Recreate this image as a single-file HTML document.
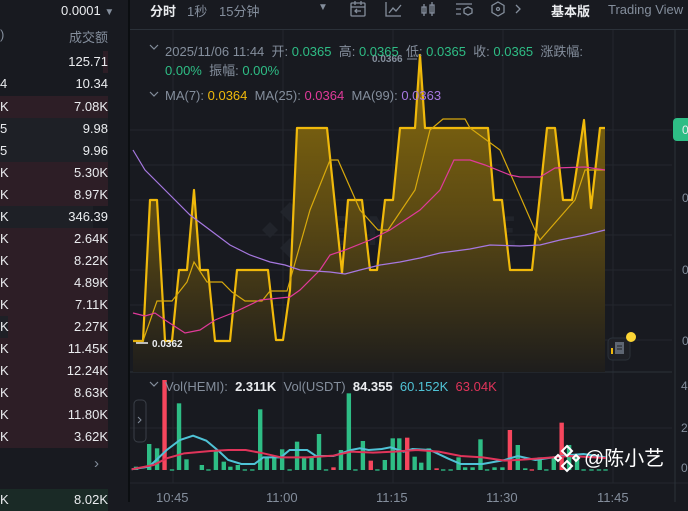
<!DOCTYPE html>
<html><head><meta charset="utf-8"><style>
body{margin:0;width:688px;height:502px;background:#181a20;overflow:hidden;font-family:"Liberation Sans","Noto Sans CJK SC",sans-serif;position:relative}
.a{position:absolute;white-space:nowrap}
.r{position:absolute;left:0;width:108px;height:22px;font-size:13px;color:#eaecef;text-align:right;line-height:22px}
</style></head><body>
<div class="a" style="left:0;top:0;width:108px;height:502px;background:#181a20"></div>
<div class="a" style="left:61px;top:3px;font-size:13px;color:#eaecef">0.0001 <span style="color:#848e9c;font-size:10px">▼</span></div>
<div class="a" style="left:0;top:27px;font-size:13px;color:#848e9c">)</div>
<div class="a" style="left:69px;top:27px;font-size:13px;color:#848e9c">成交额</div>
<div class="r" style="top:51px"><div class="a" style="left:103px;width:5px;height:22px;background:#2d1e26"></div><span style="position:relative">125.71</span></div>
<div class="r" style="top:73px"><span class="a" style="left:0;color:#eaecef">4</span>10.34</div>
<div class="r" style="top:96px;background:#2d1e26"><span class="a" style="left:0">K</span>7.08K</div>
<div class="r" style="top:118px;background:#1e2026"><span class="a" style="left:0">5</span>9.98</div>
<div class="r" style="top:140px;background:#1e2026"><span class="a" style="left:0">5</span>9.96</div>
<div class="r" style="top:162px;background:#2d1e26"><span class="a" style="left:0">K</span>5.30K</div>
<div class="r" style="top:184px;background:#2d1e26"><span class="a" style="left:0">K</span>8.97K</div>
<div class="r" style="top:206px;background:linear-gradient(90deg,#1e2026 0,#1e2026 93px,#181a20 93px)"><span class="a" style="left:0">K</span>346.39</div>
<div class="r" style="top:228px;background:#2d1e26"><span class="a" style="left:0">K</span>2.64K</div>
<div class="r" style="top:250px;background:#2d1e26"><span class="a" style="left:0">K</span>8.22K</div>
<div class="r" style="top:272px;background:#2d1e26"><span class="a" style="left:0">K</span>4.89K</div>
<div class="r" style="top:294px;background:#2d1e26"><span class="a" style="left:0">K</span>7.11K</div>
<div class="r" style="top:316px;background:linear-gradient(90deg,#1e2026 0,#1e2026 8px,#2d1e26 8px)"><span class="a" style="left:0">K</span>2.27K</div>
<div class="r" style="top:338px;background:#2d1e26"><span class="a" style="left:0">K</span>11.45K</div>
<div class="r" style="top:360px;background:#2d1e26"><span class="a" style="left:0">K</span>12.24K</div>
<div class="r" style="top:382px;background:#2d1e26"><span class="a" style="left:0">K</span>8.63K</div>
<div class="r" style="top:404px;background:#2d1e26"><span class="a" style="left:0">K</span>11.80K</div>
<div class="r" style="top:426px;background:#2d1e26"><span class="a" style="left:0">K</span>3.62K</div>
<div class="a" style="left:94px;top:455px;font-size:15px;color:#848e9c">›</div>
<div class="r" style="top:489px;background:#1a2a26"><span class="a" style="left:0">K</span>8.02K</div>
<div class="a" style="left:128px;top:0;width:2px;height:502px;background:#0b0e11"></div>

<div class="a" style="left:150px;top:1px;font-size:13px;color:#eaecef;font-weight:bold">分时</div>
<div class="a" style="left:187px;top:1px;font-size:13px;color:#848e9c">1秒</div>
<div class="a" style="left:219px;top:1px;font-size:13px;color:#848e9c">15分钟</div>
<div class="a" style="left:318px;top:2px;font-size:10px;color:#848e9c">▼</div>
<svg class="a" style="left:344px;top:0" width="200" height="22" fill="none" stroke="#848e9c" stroke-width="1.3">
<rect x="7" y="3" width="14" height="13" rx="1"/><path d="M7 7h14M11 1v4M17 1v4M17 11h-6M13 9l-2 2 2 2"/>
<path d="M42 2v14h15M45 13l4-5 3 3 5-6"/>
<path d="M80 4v12M78 7h4v6h-4zM88 2v14M86 5h4v8h-4z"/>
<path d="M112 4h16M112 9h5M112 14h5"/><path d="M124 7l4 2v4l-4 2-4-2v-4z"/>
<path d="M154 2l6 3.5v7L154 16l-6-3.5v-7z"/><circle cx="154" cy="9" r="1.5"/>
<path d="M172 5l4 4-4 4"/>
</svg>
<div class="a" style="left:551px;top:1px;font-size:13px;color:#eaecef;font-weight:bold">基本版</div>
<div class="a" style="left:608px;top:2px;font-size:13px;color:#848e9c">Trading View</div>
<div class="a" style="left:130px;top:29px;width:558px;height:1px;background:#2b3139"></div>

<svg class="a" style="left:0;top:0" width="688" height="502">
<g stroke="#23272e" stroke-width="1">
<path d="M130 130H672M130 165H672M130 200H672M130 235H672M130 270H672M130 305H672M130 340H672M130 428H672M130 483H688"/>
<path d="M173 30V483M283 30V483M393 30V483M503 30V483M613 30V483"/>
</g>
<path d="M130 372H672" stroke="#2b3139"/>
<path d="M675 30V502" stroke="#2b3139"/>
<g transform="translate(290,230)" fill="#23262d" opacity=".9"><path d="M0-28l10 10-10 10-10-10zM-20-8l8 8-8 8-8-8zM20-8l8 8-8 8-8-8zM0 8l10 10-10 10-10-10z"/><text x="35" y="15" font-size="42" font-weight="bold" font-family="Liberation Sans">BINANCE</text></g>
<defs><linearGradient id="g" x1="0" y1="0" x2="0" y2="1"><stop offset="0" stop-color="#8a6d0c"/><stop offset=".5" stop-color="#5c4a13"/><stop offset="1" stop-color="#1e1d1c"/></linearGradient></defs>
<path fill="url(#g)" d="M133 341L143 341L150 200L157 200L165 341L172 341L179 270L187 270L194 190L200 270L208 270L215 341L230 341L237 270L268 270L276 340L283 340L290 290L297 128L327 128L342 273L348 200L362 200L370 270L377 270L385 200L393 200L400 128L415 128L420 55L425 128L488 128L494 200L502 200L510 270L532 270L547 128L555 128L563 200L572 200L584 120L591 208L600 128L605 128L605 372L133 372Z"/>
<path fill="none" stroke="#f0b90b" stroke-width="2.2" stroke-linejoin="round" d="M133 341L143 341L150 200L157 200L165 341L172 341L179 270L187 270L194 190L200 270L208 270L215 341L230 341L237 270L268 270L276 340L283 340L290 290L297 128L327 128L342 273L348 200L362 200L370 270L377 270L385 200L393 200L400 128L415 128L420 55L425 128L488 128L494 200L502 200L510 270L532 270L547 128L555 128L563 200L572 200L584 120L591 208L600 128L605 128"/>
<path fill="none" stroke="#d8a90c" stroke-width="1.2" d="M133 341L143 341L157 301L172 301L187 282L194 262L207 282L222 282L232 292L245 301L262 301L270 291L287 291L310 210L330 160L338 160L360 210L378 230L388 230L415 190L430 130L443 119L465 119L470 128L500 150L535 230L540 240L575 200L585 170L605 170"/>
<path fill="none" stroke="#e03a9a" stroke-width="1.2" d="M133 313L145 316L155 313L165 320L185 333L200 330L215 320L235 312L260 300L290 297L300 290L320 270L330 255L345 250L370 240L390 230L420 210L440 190L454 160L470 160L485 165L510 175L520 177L540 177L555 168L585 167L605 170"/>
<path fill="none" stroke="#a678e0" stroke-width="1.2" d="M133 150L145 170L160 185L175 200L190 215L210 230L230 245L250 255L270 262L285 265L300 270L330 272L345 274L360 270L380 265L400 262L420 258L440 253L470 249L490 245L520 246L540 245L560 240L585 235L605 230"/>
<path d="M136 343h12" stroke="#eaecef" stroke-width="1.5"/>
<text x="152" y="347" font-size="10" fill="#eaecef" font-weight="bold" font-family="Liberation Sans">0.0362</text>
<text x="372" y="62" font-size="10" fill="#848e9c" font-weight="bold" font-family="Liberation Sans">0.0366</text>
<path d="M407 59h10" stroke="#848e9c"/>
<rect x="608" y="338" width="22" height="22" rx="4" fill="#1e2026" stroke="#2b3139"/>
<rect x="615" y="342" width="9" height="12" fill="#5e6673"/><path d="M617 346h5M617 349h5" stroke="#1e2026"/>
<rect x="611" y="348" width="2" height="6" fill="#f0b90b"/>
<circle cx="631" cy="337" r="5" fill="#fcd535"/>
<rect x="673" y="118" width="20" height="23" rx="4" fill="#2ebd85"/>
<text x="682" y="134" font-size="12" fill="#eaecef" font-family="Liberation Sans">0</text>
<g font-size="12" fill="#848e9c" font-family="Liberation Sans"><text x="682" y="202">0</text><text x="682" y="274">0</text><text x="682" y="345">0</text><text x="681" y="390">4</text><text x="681" y="432">2</text><text x="681" y="472">0</text></g>

<g transform="translate(0,370) scale(0.4388,0.3333)">
<g fill="#2ebd85">
<rect x="305" y="290" width="10" height="10"/><rect x="335" y="222" width="10" height="78"/><rect x="353" y="235" width="10" height="65"/>
<rect x="387" y="298" width="10" height="4"/><rect x="403" y="100" width="10" height="200"/><rect x="420" y="268" width="10" height="32"/>
<rect x="455" y="285" width="10" height="15"/><rect x="470" y="298" width="10" height="4"/><rect x="487" y="240" width="10" height="60"/>
<rect x="505" y="275" width="10" height="25"/><rect x="520" y="290" width="10" height="10"/><rect x="537" y="285" width="10" height="15"/>
<rect x="553" y="298" width="10" height="4"/><rect x="570" y="298" width="10" height="4"/><rect x="588" y="118" width="10" height="182"/>
<rect x="603" y="260" width="10" height="40"/><rect x="620" y="260" width="10" height="40"/><rect x="638" y="238" width="10" height="62"/>
<rect x="655" y="298" width="10" height="4"/><rect x="672" y="215" width="10" height="85"/><rect x="688" y="262" width="10" height="38"/>
<rect x="705" y="262" width="10" height="38"/><rect x="722" y="192" width="10" height="108"/><rect x="738" y="298" width="10" height="4"/>
<rect x="772" y="240" width="10" height="60"/><rect x="790" y="70" width="10" height="230"/><rect x="805" y="298" width="10" height="4"/>
<rect x="822" y="213" width="10" height="87"/><rect x="855" y="298" width="10" height="4"/><rect x="872" y="270" width="10" height="30"/>
<rect x="890" y="205" width="10" height="95"/><rect x="905" y="205" width="10" height="95"/><rect x="940" y="260" width="10" height="40"/>
<rect x="955" y="278" width="10" height="22"/><rect x="972" y="235" width="10" height="65"/><rect x="1005" y="298" width="10" height="4"/>
<rect x="1022" y="298" width="10" height="4"/><rect x="1040" y="262" width="10" height="38"/><rect x="1055" y="292" width="10" height="8"/>
<rect x="1072" y="292" width="10" height="8"/><rect x="1090" y="208" width="10" height="92"/><rect x="1105" y="298" width="10" height="4"/>
<rect x="1122" y="292" width="10" height="8"/><rect x="1140" y="292" width="10" height="8"/><rect x="1175" y="225" width="10" height="75"/>
<rect x="1192" y="295" width="10" height="5"/><rect x="1225" y="262" width="10" height="38"/><rect x="1240" y="298" width="10" height="4"/>
<rect x="1257" y="262" width="10" height="38"/><rect x="1292" y="225" width="10" height="75"/><rect x="1310" y="262" width="10" height="38"/>
<rect x="1325" y="298" width="10" height="4"/><rect x="1343" y="298" width="10" height="4"/><rect x="1360" y="298" width="10" height="4"/><rect x="1375" y="298" width="10" height="4"/>
</g>
<g fill="#f6465d">
<rect x="370" y="30" width="10" height="270"/><rect x="755" y="292" width="10" height="8"/><rect x="840" y="272" width="10" height="28"/>
<rect x="923" y="203" width="10" height="97"/><rect x="990" y="295" width="10" height="5"/><rect x="1157" y="180" width="10" height="120"/>
<rect x="1207" y="298" width="10" height="4"/><rect x="1275" y="158" width="10" height="142"/>
</g>
<path fill="none" stroke="#4fc3d6" stroke-width="2" vector-effect="non-scaling-stroke" d="M300 298L340 290L380 240L410 210L440 197L470 212L500 245L520 270L550 282L580 282L600 262L640 262L660 240L700 240L720 258L760 258L800 240L820 235L840 240L870 237L890 232L920 245L940 237L980 240L1020 265L1050 282L1100 282L1150 270L1180 258L1220 270L1260 262L1300 255L1330 252L1380 262"/>
<path fill="none" stroke="#e0345a" stroke-width="2" vector-effect="non-scaling-stroke" d="M300 298L350 285L380 265L420 250L480 243L520 240L560 240L600 250L640 262L700 262L760 257L800 245L850 248L900 245L950 240L1000 245L1050 258L1100 262L1150 272L1200 268L1260 262L1300 258L1380 264"/>
</g>
<rect x="134" y="400" width="12" height="42" rx="4" fill="none" stroke="#3a3f47"/>
<path d="M138 417l3 3-3 3" stroke="#848e9c" fill="none"/>
<path d="M150 45l4 4 4-4M150 92l4 4 4-4M150 382l4 4 4-4" stroke="#848e9c" fill="none" stroke-width="1.2"/>
<g transform="translate(567,455)" fill="none" stroke="#fff" stroke-width="2"><path d="M0-9l5 5-5 5-5-5zM-9 0l3 3-3 3-3-3zM9 0l3 3-3 3-3-3zM0 6l5 5-5 5-5-5z"/></g>
</svg>

<div class="a" style="left:165px;top:41px;font-size:13px;color:#848e9c">2025/11/06 11:44&nbsp;&nbsp;开: <span style="color:#2ebd85">0.0365</span>&nbsp;&nbsp;高: <span style="color:#2ebd85">0.0365</span>&nbsp;&nbsp;低: <span style="color:#2ebd85">0.0365</span>&nbsp;&nbsp;收: <span style="color:#2ebd85">0.0365</span>&nbsp;&nbsp;涨跌幅:</div>
<div class="a" style="left:165px;top:60px;font-size:13px;color:#848e9c"><span style="color:#2ebd85">0.00%</span>&nbsp;&nbsp;振幅: <span style="color:#2ebd85">0.00%</span></div>
<div class="a" style="left:165px;top:88px;font-size:13px;color:#848e9c">MA(7): <span style="color:#f0b90b">0.0364</span>&nbsp;&nbsp;MA(25): <span style="color:#e03a9a">0.0364</span>&nbsp;&nbsp;MA(99): <span style="color:#a678e0">0.0363</span></div>
<div class="a" style="left:165px;top:379px;font-size:13px;color:#848e9c">Vol(HEMI):&nbsp; <span style="color:#eaecef;font-weight:bold">2.311K</span>&nbsp;&nbsp;Vol(USDT)&nbsp; <span style="color:#eaecef;font-weight:bold">84.355</span>&nbsp;&nbsp;<span style="color:#4fc3d6">60.152K</span>&nbsp;&nbsp;<span style="color:#e0345a">63.04K</span></div>
<div class="a" style="left:584px;top:442px;font-size:20px;color:#fff">@陈小艺</div>
<div class="a" style="left:156px;top:490px;font-size:13px;color:#848e9c">10:45</div>
<div class="a" style="left:266px;top:490px;font-size:13px;color:#848e9c">11:00</div>
<div class="a" style="left:376px;top:490px;font-size:13px;color:#848e9c">11:15</div>
<div class="a" style="left:486px;top:490px;font-size:13px;color:#848e9c">11:30</div>
<div class="a" style="left:597px;top:490px;font-size:13px;color:#848e9c">11:45</div>
</body></html>
